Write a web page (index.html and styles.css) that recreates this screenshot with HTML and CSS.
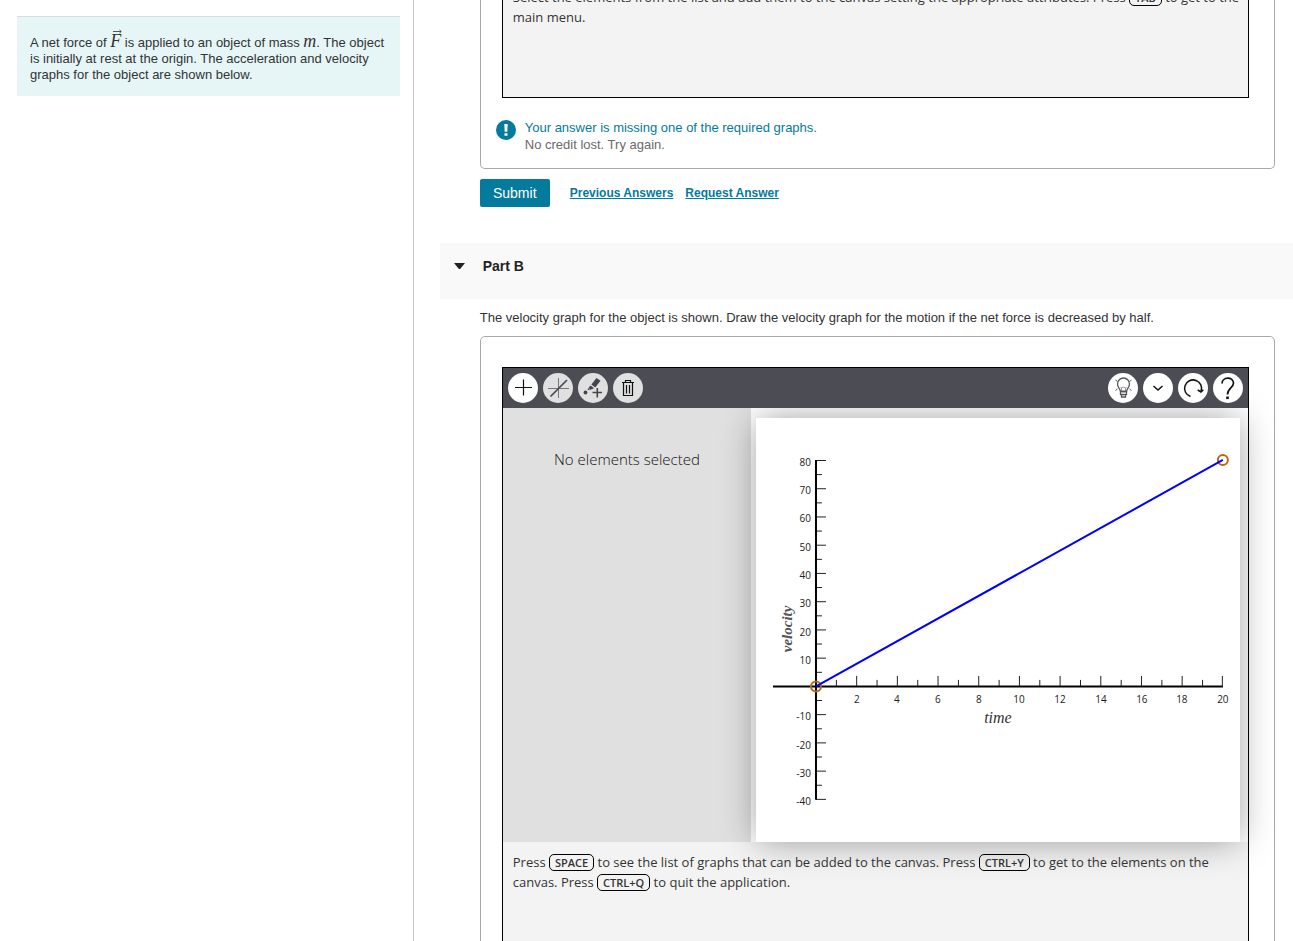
FILE: index.html
```html
<!DOCTYPE html>
<html lang="en">
<head>
    <meta charset="UTF-8">
    <meta name="viewport" content="width=device-width, initial-scale=1.0">
    <title>Velocity graph</title>
    <link rel="stylesheet" href="styles.css">
</head>
<body>

<aside class="sidebar">
    <div class="intro">
        A net force of <span class="math vector">F<svg class="arrow" viewBox="0 0 9 5"><path d="M0 2.5H8M6.500 1L8.3 2.5L6.500 4" fill="none" stroke="#333" stroke-width=".8"/></svg></span> is applied to an object of mass <span class="math">m</span>. The object is initially at rest at the origin. The acceleration and velocity graphs for the object are shown below.
    </div>
</aside>

<main class="content">
    <!-- Part A (scrolled) -->
    <section class="answer-box answer-box-a">
        <div class="applet applet-a">
            <p class="help">Select the elements from the list and add them to the canvas setting the appropriate attributes. Press <kbd>TAB</kbd> to get to the main menu.</p>
        </div>
        <div class="feedback">
            <svg class="feedback-icon" viewBox="0 0 20 20">
                <circle cx="10" cy="10" r="10" fill="#047a9c"/>
                <path d="M8.3 4h3.4l-.4 7.8H8.7zM8.5 13.2h3v2.6h-3z" fill="#fff"/>
            </svg>
            <div>
                <div class="feedback-title">Your answer is missing one of the required graphs.</div>
                <div class="feedback-note">No credit lost. Try again.</div>
            </div>
        </div>
    </section>
    <div class="actions">
        <button class="submit">Submit</button>
        <a href="#">Previous Answers</a>
        <a href="#">Request Answer</a>
    </div>

    <!-- Part B -->
    <header class="part-header">
        <svg class="caret" viewBox="0 0 11 6"><path d="M0 0h11L6.500 5.4q-1 1-2 0z" fill="#222"/></svg>
        <h2>Part B</h2>
    </header>
    <p class="question">The velocity graph for the object is shown. Draw the velocity graph for the motion if the net force is decreased by half.</p>

    <section class="answer-box answer-box-b">
        <div class="applet">
            <div class="toolbar">
                <button class="tool" aria-label="Add element">
                    <svg viewBox="0 0 30 30"><path d="M7 14.5h17M15.5 6.500v16" stroke="#111" stroke-width="1.200"/></svg>
                </button>
                <button class="tool tool-off" aria-label="Add line">
                    <svg viewBox="0 0 30 30"><path d="M5 15.500h21M15.500 5v20" stroke="#77777c" stroke-width="1"/><path d="M7.500 23.500L24 7" stroke="#4a4a50" stroke-width="1.700"/></svg>
                </button>
                <button class="tool tool-off" aria-label="Edit element">
                    <svg viewBox="0 0 30 30">
                        <path d="M18.500 5l4 2.700-5.300 6.800-3.800-3z" fill="#44444c"/>
                        <path d="M12.600 12.600l3.400 2.700-4.600 2z" fill="#44444c"/>
                        <path d="M12.600 13l-2.600 4" stroke="#44444c" stroke-width="1.200"/>
                        <circle cx="7.500" cy="19.500" r="1.900" fill="#44444c"/>
                        <path d="M14.500 19.500h9.500M19.300 15v9.500" stroke="#44444c" stroke-width="1.600"/>
                    </svg>
                </button>
                <button class="tool tool-off" aria-label="Delete">
                    <svg viewBox="0 0 30 30"><path d="M9 9.500h12M12.500 9V7.500h5V9M10.500 10v12.500h9V10M13.500 12v8.500M16.500 12v8.500" fill="none" stroke="#111" stroke-width="1.200"/></svg>
                </button>
                <span class="spacer"></span>
                <button class="tool" aria-label="Hint">
                    <svg viewBox="0 0 30 30" fill="none" stroke="#55555c">
                        <path d="M12.500 18.500c0-2.500-3-3.500-3-7.500a6 6 0 0 1 12 0c0 4-3 5-3 7.500z" stroke-width="1.300"/>
                        <path d="M12.500 14l1 1 2-1 2 1 1-1M13.500 15v3M17.500 15v3" stroke-width=".6"/>
                        <path d="M12.500 18.500h6v3h-6zM13.500 21.500v2.500h4v-2.500" stroke-width="1.300"/>
                        <path d="M7.500 7l2 1.500M23.500 7l-2 1.500M7.500 17.500l2-1.500M23.500 17.500l-2-1.500"/>
                    </svg>
                </button>
                <button class="tool" aria-label="More">
                    <svg viewBox="0 0 30 30"><path d="M10.500 13l4.500 4 4.500-4" fill="none" stroke="#111" stroke-width="1.500"/></svg>
                </button>
                <button class="tool" aria-label="Reset">
                    <svg viewBox="0 0 30 30"><path d="M12.500 23.500A8.500 8.500 0 1 1 23 18.500M19.700 17l3.300 2 2.300-2.300" fill="none" stroke="#111" stroke-width="1.500"/></svg>
                </button>
                <button class="tool" aria-label="Help">
                    <svg viewBox="0 0 30 30"><path d="M9 10.500c0-7 11.500-7 11.500-.5 0 5-6 5-6 11.500" fill="none" stroke="#111" stroke-width="1.700"/><path d="M13.200 23.500h2.600v2.600h-2.600z" fill="#111"/></svg>
                </button>
            </div>
            <div class="workspace">
                <div class="selection">No elements selected</div>
                <div class="canvas-area">
                    <svg class="graph" viewBox="0 0 484 424">
                        <!-- ticks -->
                        <path class="tick" d="M60 42.500h10M60 70.750h10M60 99h10M60 127.250h10M60 155.500h10M60 183.750h10M60 212h10M60 240.250h10M60 296.750h10M60 325h10M60 353.250h10M60 381.500h10"/>
                        <path class="tick" d="M60 56.600h6M60 84.900h6M60 113.100h6M60 141.400h6M60 169.600h6M60 197.900h6M60 226.100h6M60 254.400h6M60 282.600h6M60 310.900h6M60 339.100h6M60 367.400h6"/>
                        <path class="tick" d="M100.700 268v-10M141.400 268v-10M182.100 268v-10M222.800 268v-10M263.500 268v-10M304.200 268v-10M344.900 268v-10M385.600 268v-10M426.300 268v-10M466.500 268v-10"/>
                        <path class="tick" d="M80.400 268v-6M121.100 268v-6M161.800 268v-6M202.500 268v-6M243.200 268v-6M283.900 268v-6M324.600 268v-6M365.300 268v-6M406 268v-6M446.700 268v-6"/>
                        <!-- axes -->
                        <path class="axis" d="M17 268.500H467M60 42V382"/>
                        <g class="labels labels-y">
                            <text x="55" y="48">80</text>
                            <text x="55" y="76">70</text>
                            <text x="55" y="104">60</text>
                            <text x="55" y="133">50</text>
                            <text x="55" y="161">40</text>
                            <text x="55" y="189">30</text>
                            <text x="55" y="218">20</text>
                            <text x="55" y="246">10</text>
                            <text x="55" y="302">-10</text>
                            <text x="55" y="331">-20</text>
                            <text x="55" y="359">-30</text>
                            <text x="55" y="387">-40</text>
                        </g>
                        <g class="labels labels-x">
                            <text x="101" y="285">2</text>
                            <text x="141" y="285">4</text>
                            <text x="182" y="285">6</text>
                            <text x="223" y="285">8</text>
                            <text x="263" y="285">10</text>
                            <text x="304" y="285">12</text>
                            <text x="345" y="285">14</text>
                            <text x="386" y="285">16</text>
                            <text x="426" y="285">18</text>
                            <text x="467" y="285">20</text>
                        </g>
                        <text class="axis-title" x="242" y="305">time</text>
                        <text class="axis-title axis-title-y" transform="translate(36 211) rotate(-90)">velocity</text>
                        <!-- velocity line -->
                        <circle class="handle" cx="60" cy="268.500" r="5"/>
                        <circle class="handle" cx="467" cy="42" r="5"/>
                        <path class="plot" d="M60 268.500L467 42"/>
                    </svg>
                </div>
            </div>
            <p class="help">Press <kbd>SPACE</kbd> to see the list of graphs that can be added to the canvas. Press <kbd>CTRL+Y</kbd> to get to the elements on the canvas. Press <kbd>CTRL+Q</kbd> to quit the application.</p>
        </div>
    </section>
</main>

</body>
</html>
```
FILE: styles.css
```css
* {
    box-sizing: border-box;
}

body {
    margin: 0;
    height: 100vh;
    overflow: hidden;
    display: flex;
    background-color: #fff;
    color: #333;
    font-family: "Liberation Sans", Arial, sans-serif;
    font-size: 13px;
    line-height: 16px;
}

.sidebar {
    flex: 0 0 32%;
    border-right: 1px solid #c7c7c7;
    padding: 16px 13px 0 17px;
}

.intro {
    background-color: #e6f6f7;
    border-top: 1px solid #dadada;
    padding: 18px 8px 13px 13px;
}

.math {
    font-family: "Liberation Serif", serif;
    font-style: italic;
    font-size: 18px;
    line-height: 12px;
}

.vector {
    position: relative;
}

.arrow {
    position: absolute;
    top: -2px;
    left: 3px;
    width: 9px;
    height: 5px;
}

.content {
    flex: 1;
    min-width: 0;
    padding-left: 26px;
}

.answer-box {
    margin: 0 18px 0 40px;
    border: 1px solid #a9a9a9;
    border-radius: 5px;
    padding: 30px 25px 0 21px;
}

.answer-box-a {
    border-top: none;
    border-radius: 0 0 5px 5px;
    padding-top: 0;
    padding-bottom: 15px;
}

.answer-box-b {
    margin-top: 10px;
}

.applet {
    border: 1px solid #000;
    background-color: #f3f3f3;
    height: 640px;
}

.applet-a {
    display: flow-root;
    border-top: none;
    height: 98px;
}

.help {
    margin: 0;
    padding: 10px 4px 0 10px;
    font-family: "Open Sans", "Noto Sans", sans-serif;
    font-size: 13px;
    line-height: 20px;
}

.applet-a .help {
    margin-top: -13px;
    padding-top: 0;
}

kbd {
    border: 1px solid #000;
    border-radius: 5px;
    padding: 0 5px;
    font-family: "Open Sans", "Noto Sans", sans-serif;
    font-weight: 600;
    font-size: 11px;
    line-height: 14px;
}

.feedback {
    display: flex;
    gap: 9px;
    margin: 21px 0 0 -6px;
    line-height: 17px;
}

.feedback-icon {
    width: 20px;
    height: 20px;
    margin-top: 1px;
}

.feedback-title {
    color: #047a9c;
}

.feedback-note {
    color: #6a6a6a;
}

.actions {
    display: flex;
    align-items: center;
    gap: 12px;
    margin: 10px 0 0 40px;
}

.submit {
    width: 70px;
    height: 28px;
    margin-right: 8px;
    padding: 0;
    border: none;
    border-radius: 2px;
    background-color: #047a9c;
    color: #fff;
    font-family: inherit;
    font-size: 14px;
    cursor: pointer;
}

.actions a {
    color: #047a9c;
    font-size: 12px;
    font-weight: bold;
}

.part-header {
    display: flex;
    gap: 18px;
    margin-top: 36px;
    padding: 15px 14px;
    height: 56px;
    background-color: #f9f9f9;
}

.part-header h2 {
    margin: 0;
    color: #222;
    font-size: 14px;
}

.caret {
    width: 11px;
    height: 16px;
}

.question {
    margin: 11px 0 0 40px;
}

.toolbar {
    display: flex;
    gap: 5px;
    align-items: center;
    height: 40px;
    padding: 0 5px;
    background-color: #4c4c55;
    position: relative;
    z-index: 1;
}

.tool {
    width: 30px;
    height: 30px;
    padding: 0;
    border: none;
    border-radius: 50%;
    background-color: #fff;
    cursor: pointer;
}

.tool svg {
    display: block;
    width: 30px;
    height: 30px;
}

.tool-off {
    background-color: #e0e0e0;
}

.spacer {
    flex: 1;
}

.workspace {
    display: grid;
    grid-template-columns: 1fr 2fr;
}

.selection {
    padding-top: 41px;
    background-color: #e0e0e0;
    text-align: center;
    font-family: "Open Sans", "Noto Sans", sans-serif;
    font-weight: 300;
    font-size: 15px;
    line-height: 20px;
    color: #111;
}

.canvas-area {
    padding: 10px 8px 0 5px;
    background-color: #fff;
}

.graph {
    display: block;
    width: 100%;
    background-color: #fff;
    box-shadow: 0 0 34px -2px rgba(0, 0, 0, 0.4);
}

.tick {
    stroke: #222;
    stroke-width: 1;
}

.axis {
    stroke: #000;
    stroke-width: 2;
}

.labels {
    fill: #222;
    font-family: "Open Sans", "Noto Sans", sans-serif;
    font-size: 10px;
}

.labels-y {
    text-anchor: end;
}

.labels-x {
    text-anchor: middle;
}

.axis-title {
    fill: #333;
    font-family: "Liberation Serif", serif;
    font-style: italic;
    font-size: 16px;
    text-anchor: middle;
}

.axis-title-y {
    font-weight: bold;
    font-size: 15px;
    fill: #555;
}

.handle {
    fill: none;
    stroke: #b8690b;
    stroke-width: 2;
}

.plot {
    stroke: #00f;
    stroke-width: 2;
}
```
